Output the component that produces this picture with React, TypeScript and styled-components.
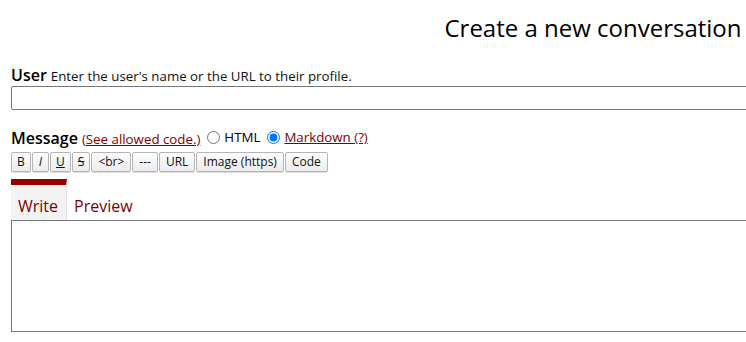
import * as React from 'react'
import styled, { createGlobalStyle } from 'styled-components'

const Global = createGlobalStyle`
  html, body {
    margin: 0;
    padding: 0;
    overflow: hidden;
    background: #fff;
  }
  body {
    font-family: "Open Sans", "Noto Sans", sans-serif;
    color: #000;
  }
`

const Page = styled.div`
  width: 1164px;
  padding: 0 0 0 11px;
`

const Title = styled.h1`
  margin: 0;
  padding-top: 10px;
  height: 38px;
  text-align: center;
  font-size: 24px;
  font-weight: 400;
  line-height: 36px;
  color: #000;
`

const Field = styled.div<{ $top: number }>`
  margin-top: ${p => p.$top}px;
`

const LabelRow = styled.div`
  display: flex;
  align-items: baseline;
  gap: 4px;
  line-height: 20px;
  white-space: nowrap;
`

const Label = styled.label`
  font-size: 16px;
  font-weight: 600;
`

const Hint = styled.span`
  font-size: 13.3px;
  color: #111;
`

const HelpLink = styled.a`
  font-size: 13.3px;
  color: #800000;
  text-decoration: underline;
  cursor: pointer;
`

const Radio = styled.label`
  display: inline-flex;
  align-items: center;
  gap: 4px;
  font-size: 13.3px;
  margin-left: 3px;

  input {
    margin: 0;
    width: 13px;
    height: 13px;
    accent-color: #0075ff;
  }
`

const TextInput = styled.input`
  display: block;
  box-sizing: border-box;
  width: 100%;
  height: 24px;
  margin-top: 0;
  border: 1px solid #767676;
  border-radius: 2px;
  font: inherit;
`

const Toolbar = styled.div`
  display: flex;
  gap: 1px;
  margin-top: 3px;
`

const ToolButton = styled.button<{ $pad?: number }>`
  box-sizing: border-box;
  height: 20px;
  margin: 0;
  padding: 0 ${p => p.$pad ?? 6}px;
  border: 1px solid #b5b5b5;
  border-radius: 2px;
  background: linear-gradient(#fdfdfd, #ececec);
  font-family: "Open Sans", sans-serif;
  font-size: 12px;
  line-height: 17px;
  color: #111;
  box-shadow: 0 1px 0 #ddd;
`

const Tabs = styled.div`
  display: flex;
  margin-top: 7px;
`

const Tab = styled.div<{ $active?: boolean }>`
  box-sizing: border-box;
  height: 41px;
  padding: 10px 8px 0 7px;
  font-size: 16px;
  line-height: 22px;
  color: #800000;
  background: ${p => (p.$active ? '#f3f3f3' : 'transparent')};
  border-top: 6px solid ${p => (p.$active ? '#990000' : 'transparent')};
  border-right: ${p => (p.$active ? '1px solid #e4e4e4' : 'none')};
`

const TextArea = styled.textarea`
  display: block;
  box-sizing: border-box;
  width: 100%;
  height: 112px;
  border: 1px solid #767676;
  resize: none;
  font: inherit;
`

const buttons: { label: React.ReactNode; key: string; pad?: number }[] = [
  { key: 'b', label: 'B', pad: 5 },
  { key: 'i', label: <i>I</i>, pad: 6 },
  { key: 'u', label: <u>U</u>, pad: 5 },
  { key: 's', label: <s>S</s>, pad: 5 },
  { key: 'br', label: '<br>' },
  { key: 'hr', label: '---' },
  { key: 'url', label: 'URL' },
  { key: 'img', label: 'Image (https)' },
  { key: 'code', label: 'Code' },
]

export default function App() {
  return (
    <Page>
      <Global />
      <Title>Create a new conversation</Title>
      <Field $top={17}>
        <LabelRow>
          <Label>User</Label>
          <Hint>Enter the user's name or the URL to their profile.</Hint>
        </LabelRow>
        <TextInput type="text" />
      </Field>
      <Field $top={17}>
        <LabelRow>
          <Label>Message</Label>
          <HelpLink>(See allowed code.)</HelpLink>
          <Radio>
            <input type="radio" name="fmt" /> HTML
          </Radio>
          <Radio>
            <input type="radio" name="fmt" defaultChecked />
            <HelpLink>Markdown (?)</HelpLink>
          </Radio>
        </LabelRow>
        <Toolbar>
          {buttons.map(b => (
            <ToolButton key={b.key} type="button" $pad={b.pad}>{b.label}</ToolButton>
          ))}
        </Toolbar>
        <Tabs>
          <Tab $active>Write</Tab>
          <Tab>Preview</Tab>
        </Tabs>
        <TextArea />
      </Field>
    </Page>
  )
}
